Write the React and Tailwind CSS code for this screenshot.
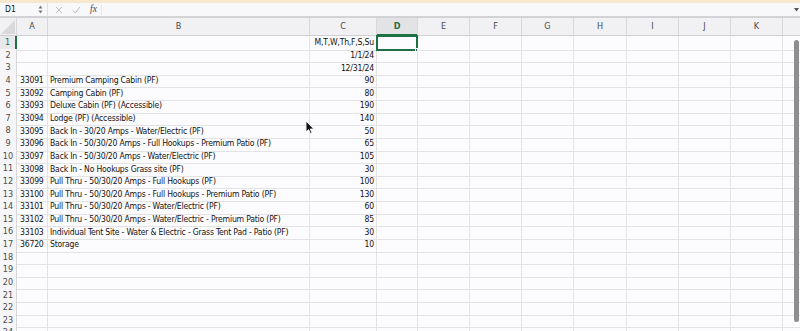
import React from "react";

const rows = [
  ["", "", "M,T,W,Th,F,S,Su"],
  ["", "", "1/1/24"],
  ["", "", "12/31/24"],
  ["33091", "Premium Camping Cabin (PF)", "90"],
  ["33092", "Camping Cabin (PF)", "80"],
  ["33093", "Deluxe Cabin (PF) (Accessible)", "190"],
  ["33094", "Lodge (PF) (Accessible)", "140"],
  ["33095", "Back In - 30/20 Amps - Water/Electric (PF)", "50"],
  ["33096", "Back In - 50/30/20 Amps - Full Hookups - Premium Patio (PF)", "65"],
  ["33097", "Back In - 50/30/20 Amps - Water/Electric (PF)", "105"],
  ["33098", "Back In - No Hookups Grass site (PF)", "30"],
  ["33099", "Pull Thru - 50/30/20 Amps - Full Hookups (PF)", "100"],
  ["33100", "Pull Thru - 50/30/20 Amps - Full Hookups - Premium Patio (PF)", "130"],
  ["33101", "Pull Thru - 50/30/20 Amps - Water/Electric (PF)", "60"],
  ["33102", "Pull Thru - 50/30/20 Amps - Water/Electric - Premium Patio (PF)", "85"],
  ["33103", "Individual Tent Site - Water & Electric - Grass Tent Pad - Patio (PF)", "30"],
  ["36720", "Storage", "10"],
];
while (rows.length < 24) rows.push(["", "", ""]);

const cols = "grid grid-cols-[17px_31px_262px_67px_41px_52px_52px_52px_53px_52px_52px_52px_1fr]";
const letters = ["E", "F", "G", "H", "I", "J", "K"];

export default function App() {
  return (
    <div
      className="relative w-[800px] h-[331px] overflow-hidden bg-[#fcfbfd] text-[#141414]"
      style={{ fontFamily: '"DejaVu Sans Condensed", "Liberation Sans", Arial, sans-serif' }}
    >
      <div className="h-[3px] bg-[#f6e8cc]" />
      {/* formula bar */}
      <div className="h-[15px] flex items-center bg-[#f8f7fa] border-b-2 border-[#d3d2d5]">
        <div className="w-[48px] h-full flex items-center justify-between pl-[5px] pr-[4px] border-r border-[#e0dfe2] text-[8.5px]">
          <span>D1</span>
          <svg width="5" height="9" viewBox="0 0 5 9">
            <path d="M2.5 0.5 L4.5 3.5 L0.5 3.5 Z" fill="#777" />
            <path d="M2.5 8.5 L4.5 5.5 L0.5 5.5 Z" fill="#777" />
          </svg>
        </div>
        <div className="flex items-center gap-[9px] pl-[7px] pr-[4px] h-full">
          <svg width="8" height="8" viewBox="0 0 8 8" stroke="#b5b5b8" strokeWidth="0.9" fill="none">
            <path d="M1 1 L7 7 M7 1 L1 7" />
          </svg>
          <svg width="9" height="8" viewBox="0 0 9 8" stroke="#b5b5b8" strokeWidth="0.9" fill="none">
            <path d="M1 4.5 L3.3 7 L8 1" />
          </svg>
          <span className="italic text-[9.5px] text-[#4a4a4a]" style={{ fontFamily: '"Liberation Serif", serif' }}>fx</span>
        </div>
        <div className="w-px h-[10px] bg-[#e6e5e8]" />
        <div className="flex-1" />
        <svg width="5" height="4" viewBox="0 0 5 4" className="mr-[1px]">
          <path d="M0 0 L5 0 L2.5 3.5 Z" fill="#555" />
        </svg>
      </div>
      {/* column headers */}
      <div className={`${cols} h-[18px] bg-[#f1f0f3] border-b border-[#cfcfd2] text-[9px] text-[#4a4a4a]`}>
        <div className="relative border-r border-[#d8d8db]">
          <svg width="14" height="14" viewBox="0 0 14 14" className="absolute right-[1px] bottom-[1px]">
            <path d="M14 0 L14 14 L0 14 Z" fill="#d9d8db" />
          </svg>
        </div>
        <div className="flex items-center justify-center border-r border-[#d8d8db]">A</div>
        <div className="flex items-center justify-center border-r border-[#d8d8db]">B</div>
        <div className="flex items-center justify-center border-r border-[#d8d8db]">C</div>
        <div className="flex items-center justify-center border-r border-[#d8d8db] bg-[#e3e2e5] text-[#1e7145] font-bold shadow-[inset_0_-1px_0_#1e7145]">D</div>
        {letters.map((l) => (
          <div key={l} className="flex items-center justify-center border-r border-[#d8d8db]">{l}</div>
        ))}
        <div />
      </div>
      {/* rows */}
      <div className="flex flex-col text-[8.6px] tracking-[-0.2px]">
        {rows.map((r, i) => (
          <div key={i} className={`${cols} h-[12.63px]`}>
            <div
              className={`flex items-center justify-center border-b border-[#e3e3e5] text-[9px] tracking-normal ${
                i === 0
                  ? "bg-[#e9e8eb] text-[#1e7145] border-r-2 border-r-[#1e7145]"
                  : "bg-[#f6f5f8] text-[#4d4d4d] border-r border-r-[#d8d8db]"
              }`}
            >
              {i + 1}
            </div>
            <div className="flex items-center pl-[3px] border-r border-b border-[#e3e3e5] whitespace-nowrap">{r[0]}</div>
            <div className="flex items-center pl-[2px] border-r border-b border-[#e3e3e5] whitespace-nowrap overflow-hidden">{r[1]}</div>
            <div className="flex items-center justify-end pr-[2px] border-r border-b border-[#e3e3e5] whitespace-nowrap">{r[2]}</div>
            <div className="relative border-r border-b border-[#e3e3e5]">
              {i === 0 && (
                <div className="absolute -left-px -top-px -right-px -bottom-px border-2 border-[#1e7145]">
                  <div className="absolute -right-[3px] -bottom-[3px] w-[4px] h-[4px] bg-[#1e7145] border border-[#fcfbfd]" />
                </div>
              )}
            </div>
            {letters.map((l) => (
              <div key={l} className="border-r border-b border-[#e3e3e5]" />
            ))}
            <div className="border-b border-[#e3e3e5]" />
          </div>
        ))}
      </div>
      {/* vertical scrollbar */}
      <div className="absolute left-[794px] top-[40px] w-[5px] h-[282px] rounded-full bg-[#8e8e90]" />
      {/* mouse cursor */}
      <svg className="absolute left-[305px] top-[120px]" width="10" height="15" viewBox="0 0 10 15">
        <path d="M1 1 L1 12 L3.6 9.6 L5.4 13.6 L7 12.9 L5.3 9 L8.8 9 Z" fill="#111" stroke="#fff" strokeWidth="0.9" strokeLinejoin="round" />
      </svg>
    </div>
  );
}
